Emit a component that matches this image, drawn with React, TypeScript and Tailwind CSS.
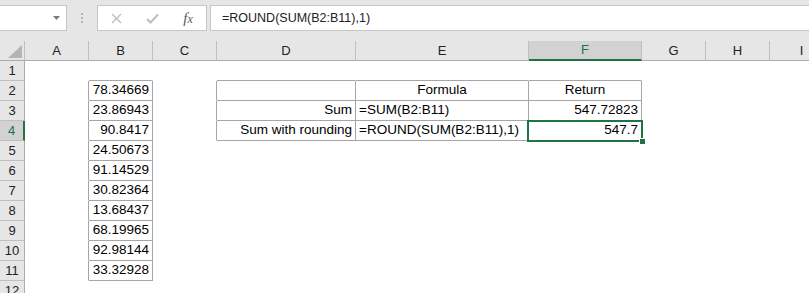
import React from "react";

type Col = { label: string; w: string };
type Cell = { text: string; align: "left" | "right" | "center" };

const cols: Col[] = [
  { label: "A", w: "w-[64px]" },
  { label: "B", w: "w-[64px]" },
  { label: "C", w: "w-[64px]" },
  { label: "D", w: "w-[139px]" },
  { label: "E", w: "w-[173px]" },
  { label: "F", w: "w-[113px]" },
  { label: "G", w: "w-[64px]" },
  { label: "H", w: "w-[64px]" },
  { label: "I", w: "w-[64px]" },
];

const values = [
  "78.34669", "23.86943", "90.8417", "24.50673", "91.14529",
  "30.82364", "13.68437", "68.19965", "92.98144", "33.32928",
];

const cells: Record<string, Cell> = {
  "2,E": { text: "Formula", align: "center" },
  "2,F": { text: "Return", align: "center" },
  "3,D": { text: "Sum", align: "right" },
  "3,E": { text: "=SUM(B2:B11)", align: "left" },
  "3,F": { text: "547.72823", align: "right" },
  "4,D": { text: "Sum with rounding", align: "right" },
  "4,E": { text: "=ROUND(SUM(B2:B11),1)", align: "left" },
  "4,F": { text: "547.7", align: "right" },
};
values.forEach((v, i) => {
  cells[`${i + 2},B`] = { text: v, align: "right" };
});

// cells that carry a thin grey box border
function bordered(r: number, ci: number) {
  const c = cols[ci]?.label;
  if (!c) return false;
  if (c === "B" && r >= 2 && r <= 11) return true;
  if ((c === "D" || c === "E" || c === "F") && r >= 2 && r <= 4) return true;
  return false;
}

const rows = Array.from({ length: 12 }, (_, i) => i + 1);

function FormulaBar() {
  return (
    <div className="flex h-[41px] items-start bg-[#e6e6e6] pt-[5px]">
      <div className="flex h-[26px] w-[67px] items-center justify-end border border-l-0 border-[#c6c6c6] bg-white pr-[6px]">
        <svg width="7" height="4" viewBox="0 0 7 4">
          <path d="M0 0 H7 L3.5 4 Z" fill="#7a7a7a" />
        </svg>
      </div>
      <div className="flex h-[26px] w-[30px] flex-col items-center justify-center gap-[2px]">
        <span className="h-[2px] w-[2px] bg-[#b4b4b4]" />
        <span className="h-[2px] w-[2px] bg-[#b4b4b4]" />
        <span className="h-[2px] w-[2px] bg-[#b4b4b4]" />
      </div>
      <div className="flex h-[26px] w-[110px] items-center border border-[#c6c6c6] bg-white">
        <span className="flex w-[36px] justify-center">
          <svg width="11" height="11" viewBox="0 0 11 11">
            <path d="M1 1 L10 10 M10 1 L1 10" stroke="#bdbdbd" strokeWidth="1.4" />
          </svg>
        </span>
        <span className="flex w-[36px] justify-center">
          <svg width="13" height="11" viewBox="0 0 13 11">
            <path d="M1 6 L4.5 9.5 L12 1.5" stroke="#bdbdbd" strokeWidth="2" fill="none" />
          </svg>
        </span>
        <span className="flex w-[36px] items-baseline justify-center font-['Liberation_Serif',serif] italic text-[#5a5a5a]">
          <span className="text-[15px]">f</span>
          <span className="text-[12px]">x</span>
        </span>
      </div>
      <div className="ml-[3px] flex h-[26px] flex-1 items-center border border-r-0 border-[#c6c6c6] bg-white pl-[11px] font-['Liberation_Sans',sans-serif] text-[12.5px] text-[#222]">
        =ROUND(SUM(B2:B11),1)
      </div>
    </div>
  );
}

function HeaderRow() {
  return (
    <div className="flex h-5 bg-[#e6e6e6] font-['Liberation_Sans',sans-serif] text-[13px]">
      <div className="relative h-5 w-[25px] shrink-0 border-r border-b border-r-[#bfbfbf] border-b-[#ababab]">
        <svg className="absolute left-[8px] top-[4px]" width="14" height="13" viewBox="0 0 14 13">
          <path d="M14 0 V13 H0 Z" fill="#b4b4b4" />
        </svg>
      </div>
      {cols.map((c) =>
        c.label === "F" ? (
          <div
            key={c.label}
            className={`${c.w} flex h-5 shrink-0 items-center justify-center border-r border-b-2 border-r-[#bfbfbf] border-b-[#217346] bg-[#d2d2d2] text-[#217346]`}
          >
            {c.label}
          </div>
        ) : (
          <div
            key={c.label}
            className={`${c.w} flex h-5 shrink-0 items-center justify-center border-r border-b border-r-[#bfbfbf] border-b-[#ababab] text-[#222]`}
          >
            {c.label}
          </div>
        )
      )}
    </div>
  );
}

function SheetRow({ r }: { r: number }) {
  const active = r === 4;
  return (
    <div className="flex h-5">
      <div
        className={
          active
            ? "flex h-5 w-[25px] shrink-0 items-center justify-center border-r-2 border-b border-r-[#217346] border-b-[#bfbfbf] bg-[#d2d2d2] font-['Liberation_Sans',sans-serif] text-[13px] text-[#217346]"
            : "flex h-5 w-[25px] shrink-0 items-center justify-center border-r border-b border-r-[#ababab] border-b-[#bfbfbf] bg-[#e6e6e6] font-['Liberation_Sans',sans-serif] text-[13px] text-[#222]"
        }
      >
        {r}
      </div>
      {cols.map((c, ci) => {
        const rightOn = bordered(r, ci) || bordered(r, ci + 1);
        const bottomOn = bordered(r, ci) || bordered(r + 1, ci);
        const cell = cells[`${r},${c.label}`];
        const selected = r === 4 && c.label === "F";
        const align =
          cell?.align === "right"
            ? "justify-end pr-[3px]"
            : cell?.align === "center"
            ? "justify-center"
            : "justify-start pl-[3px]";
        return (
          <div
            key={c.label}
            className={`${c.w} relative flex h-5 shrink-0 items-center overflow-visible whitespace-nowrap border-r border-b bg-white font-['Liberation_Sans',sans-serif] text-[13.5px] text-black ${align} ${
              rightOn ? "border-r-[#a6a6a6]" : "border-r-white"
            } ${bottomOn ? "border-b-[#a6a6a6]" : "border-b-white"}`}
          >
            {cell?.text}
            {selected && (
              <>
                <div className="pointer-events-none absolute -left-[2px] -top-[1px] z-10 h-[22px] w-[116px] border-2 border-[#217346]" />
                <div className="absolute left-[110px] top-[17px] z-20 h-[7px] w-[7px] border border-white bg-[#217346]" />
              </>
            )}
          </div>
        );
      })}
    </div>
  );
}

export default function App() {
  return (
    <div className="h-[293px] w-[809px] overflow-hidden bg-[#e6e6e6]">
      <FormulaBar />
      <div className="flex w-[834px] flex-col">
        <HeaderRow />
        {rows.map((r) => (
          <SheetRow key={r} r={r} />
        ))}
      </div>
    </div>
  );
}
